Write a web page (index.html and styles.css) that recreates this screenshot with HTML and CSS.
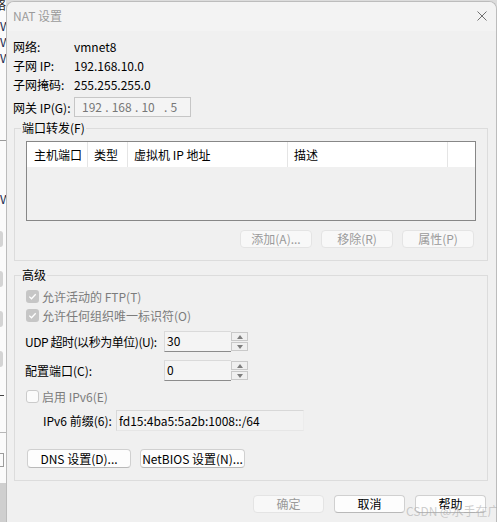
FILE: index.html
```html
<!DOCTYPE html>
<html lang="zh-CN">
<head>
<meta charset="utf-8">
<title>NAT 设置</title>
<link rel="stylesheet" href="styles.css">
</head>
<body>
<div class="screen">
  <div class="behind">
    <span class="bk-char">络</span>
    <span class="bk-w first">W</span>
    <span class="bk-w">W</span>
    <span class="bk-w">W</span>
    <span class="bk-rule"></span>
    <span class="bk-w low">W</span>
    <span class="bk-pill"></span>
    <span class="bk-pill"></span>
    <span class="bk-pill"></span>
    <span class="bk-pill"></span>
    <span class="bk-tick"></span>
    <span class="bk-rule thin"></span>
    <span class="bk-boxmark"></span>
    <span class="bk-foot"></span>
  </div>

  <div class="dialog">
    <div class="titlebar">
      <span class="title">NAT 设置</span>
      <svg class="close" width="10" height="10" viewBox="0 0 10 10" aria-hidden="true">
        <path d="M0.5 0.5L9.5 9.5M9.5 0.5L0.5 9.5" stroke="#707070" stroke-width="1" fill="none"/>
      </svg>
    </div>

    <div class="content">
      <div class="info">
        <div class="info-row"><span class="info-label">网络:</span><span>vmnet8</span></div>
        <div class="info-row"><span class="info-label">子网 IP:</span><span>192.168.10.0</span></div>
        <div class="info-row"><span class="info-label">子网掩码:</span><span>255.255.255.0</span></div>
        <div class="info-row gateway">
          <span class="info-label">网关 IP(G):</span>
          <div class="ipbox">
            <span class="oct">192</span><span class="dot">.</span>
            <span class="oct">168</span><span class="dot">.</span>
            <span class="oct">10</span><span class="dot">.</span>
            <span class="oct">5</span>
          </div>
        </div>
      </div>

      <div class="group forward">
        <div class="legend">端口转发(F)</div>
        <div class="listview">
          <div class="lv-head">
            <div class="lv-col w1">主机端口</div>
            <div class="lv-col w2">类型</div>
            <div class="lv-col w3">虚拟机 IP 地址</div>
            <div class="lv-col w4">描述</div>
            <div class="lv-col w5"></div>
          </div>
        </div>
        <div class="btn-row">
          <button class="btn disabled">添加(A)...</button>
          <button class="btn disabled">移除(R)</button>
          <button class="btn disabled">属性(P)</button>
        </div>
      </div>

      <div class="group advanced">
        <div class="legend">高级</div>

        <div class="check r-ftp">
          <span class="box checked"><svg width="9" height="9" viewBox="0 0 9 9" aria-hidden="true"><path d="M1.3 4.6L3.5 6.8L7.7 2.2" stroke="#ffffff" stroke-width="1.3" fill="none"/></svg></span>
          <span>允许活动的 FTP(T)</span>
        </div>
        <div class="check">
          <span class="box checked"><svg width="9" height="9" viewBox="0 0 9 9" aria-hidden="true"><path d="M1.3 4.6L3.5 6.8L7.7 2.2" stroke="#ffffff" stroke-width="1.3" fill="none"/></svg></span>
          <span>允许任何组织唯一标识符(O)</span>
        </div>

        <div class="field-row r-udp">
          <span class="field-label tight">UDP 超时(以秒为单位)(U):</span>
          <div class="spin">
            <div class="spin-field">30</div>
            <div class="spin-btns">
              <div class="spin-up"><span class="tri-up"></span></div>
              <div class="spin-down"><span class="tri-down"></span></div>
            </div>
          </div>
        </div>

        <div class="field-row r-port">
          <span class="field-label">配置端口(C):</span>
          <div class="spin">
            <div class="spin-field">0</div>
            <div class="spin-btns">
              <div class="spin-up"><span class="tri-up"></span></div>
              <div class="spin-down"><span class="tri-down"></span></div>
            </div>
          </div>
        </div>

        <div class="check r-ipv6">
          <span class="box unchecked"></span>
          <span>启用 IPv6(E)</span>
        </div>

        <div class="field-row r-prefix">
          <span class="prefix-label">IPv6 前缀(6):</span>
          <div class="prefix">fd15:4ba5:5a2b:1008::/64</div>
        </div>

        <div class="r-dns">
          <button class="btn dns">DNS 设置(D)...</button>
          <button class="btn netbios">NetBIOS 设置(N)...</button>
        </div>
      </div>

      <div class="footer">
        <button class="btn disabled">确定</button>
        <button class="btn">取消</button>
        <button class="btn">帮助</button>
      </div>
    </div>
  </div>

  <div class="watermark">CSDN @水手在广东</div>
</div>
</body>
</html>
```

FILE: styles.css
```css
* { box-sizing: border-box; }

html, body { margin: 0; padding: 0; }

body {
  width: 497px;
  height: 522px;
  overflow: hidden;
  background: #dcdcdc;
  font-family: "Noto Sans CJK SC", "Noto Sans", sans-serif;
  font-size: 12px;
  color: #000;
}

.screen {
  position: relative;
  display: flex;
  width: 497px;
  height: 522px;
}

/* window behind the dialog */
.behind {
  flex: none;
  width: 6px;
  overflow: hidden;
  background: #fbfbfb;
  display: flex;
  flex-direction: column;
  font-size: 12px;
  line-height: 14px;
  color: #1d1d1d;
}
.bk-char { margin-left: -6px; margin-top: -2px; }
.bk-w { margin-top: 2px; color: #1f2f55; font-family: "Liberation Sans", sans-serif; }
.bk-w.first { margin-top: 8px; }
.bk-rule { display: block; height: 1px; background: #9a9a9a; margin-top: 74px; }
.bk-rule.thin { background: #b8b8b8; margin-top: 36px; }
.bk-w.low { margin-top: 52px; }
.bk-pill { display: block; width: 3px; height: 16px; border-radius: 0 3px 3px 0; background: #d4d4d4; margin-top: 24px; }
.bk-tick { display: block; width: 4px; height: 1px; background: #444; margin-top: 28px; }
.bk-boxmark { display: block; width: 4px; height: 14px; border: 1px solid #9c9c9c; border-left: 0; margin-top: 20px; }
.bk-foot { display: block; flex: 1; background: #cfcfcf; margin-top: 16px; }

/* dialog */
.dialog {
  flex: 1;
  min-width: 0;
  margin-top: 1px;
  display: flex;
  flex-direction: column;
  background: #f0f0f0;
  border: 1px solid #bcbcbc;
  border-bottom: 0;
  border-radius: 8px 8px 0 0;
  overflow: hidden;
}

.titlebar {
  flex: none;
  height: 29px;
  display: flex;
  align-items: center;
  justify-content: space-between;
  padding: 0 9px 2px 6px;
  background: #f3f3f3;
}
.title { color: #9b9b9b; line-height: 16px; }
.close { display: block; }

.content {
  flex: 1;
  display: flex;
  flex-direction: column;
  padding: 6px 8px 0 6px;
}

.info-row {
  display: flex;
  align-items: center;
  height: 19px;
  line-height: 19px;
}
.info-label { flex: none; width: 61px; }
.info-row.gateway { height: 20px; margin-top: 3px; }

.ipbox {
  display: flex;
  align-items: center;
  width: 117px;
  height: 20px;
  padding-left: 7px;
  border: 1px solid #c6c6c6;
  background: #f4f4f4;
  color: #777;
  line-height: 18px;
}
.oct { width: 20px; }
.dot { width: 10px; text-align: center; }

/* group boxes */
.group {
  display: flex;
  flex-direction: column;
  align-items: flex-start;
  margin-left: 1px;
  border: 1px solid #dcdcdc;
  padding: 0 10px 12px 11px;
}
.forward { margin-top: 11px; }
.advanced { margin-top: 14px; }

.legend {
  height: 16px;
  line-height: 16px;
  margin: -9px 0 0 -5px;
  padding: 0 1px;
  background: #f0f0f0;
  white-space: nowrap;
}

.listview {
  width: 450px;
  height: 80px;
  margin-top: 5px;
  border: 1px solid #878787;
  background: #f0f0f0;
}
.lv-head {
  display: flex;
  height: 25px;
  background: #fff;
}
.lv-col {
  flex: none;
  height: 25px;
  line-height: 25px;
  padding-left: 6px;
  border-right: 1px solid #e5e5e5;
  white-space: nowrap;
}
.w1 { width: 61px; padding-left: 7px; }
.w2 { width: 40px; }
.w3 { width: 160px; }
.w4 { width: 160px; }
.w5 { flex: 1; border-right: 0; }

.btn-row {
  align-self: stretch;
  display: flex;
  justify-content: flex-end;
  gap: 9px;
  margin-top: 9px;
  padding-right: 3px;
}
.btn-row .btn { width: 72px; }

.btn {
  height: 18px;
  padding: 0;
  font: inherit;
  font-size: 12px;
  line-height: 16px;
  color: #000;
  background: #fdfdfd;
  border: 1px solid #d0d0d0;
  border-bottom-color: #b9b9b9;
  border-radius: 4px;
  white-space: nowrap;
}
.btn.disabled {
  color: #9a9a9a;
  background: #f8f8f8;
  border-color: #e4e4e4;
}

/* checkboxes */
.check {
  display: flex;
  align-items: center;
  gap: 3px;
  height: 19px;
  color: #7c7c7c;
}
.r-ftp { margin-top: 4px; }
.r-ipv6 { margin-top: 6px; }

.box {
  flex: none;
  width: 13px;
  height: 13px;
  border-radius: 3px;
}
.box.checked {
  display: flex;
  align-items: center;
  justify-content: center;
  background: #c6c6c6;
}
.box.checked svg { display: block; }
.box.unchecked {
  background: #fbfbfb;
  border: 1px solid #cbcbcb;
}

/* fields */
.field-row {
  display: flex;
  align-items: center;
  height: 21px;
}
.r-udp { margin-top: 6px; }
.r-port { margin-top: 8px; }
.r-prefix { margin-top: 4px; padding-left: 17px; }

.field-label {
  flex: none;
  width: 139px;
  margin-left: -1px;
  padding-right: 1px;
  white-space: nowrap;
}
.field-label.tight { letter-spacing: -0.45px; }

.spin {
  display: flex;
  width: 84px;
  height: 21px;
}
.spin-field {
  flex: 1;
  padding-left: 2px;
  line-height: 17px;
  background: #f4f4f4;
  border: 1px solid #dadada;
  border-right: 0;
  border-bottom: 1px solid #8c8c8c;
}
.spin-btns {
  flex: none;
  width: 17px;
  display: flex;
  flex-direction: column;
  gap: 1px;
  padding: 1px 0;
}
.spin-up, .spin-down {
  flex: 1;
  display: flex;
  align-items: center;
  justify-content: center;
  border: 1px solid #c9c9c9;
  background: #f0f0f0;
}
.tri-up, .tri-down {
  width: 0;
  height: 0;
  border-left: 3px solid transparent;
  border-right: 3px solid transparent;
}
.tri-up { border-bottom: 4px solid #7e7e7e; }
.tri-down { border-top: 4px solid #7e7e7e; }

.prefix-label { flex: none; width: 73px; white-space: nowrap; }
.prefix {
  width: 188px;
  height: 21px;
  padding-left: 2px;
  line-height: 19px;
  background: #f2f2f2;
  border: 1px solid #d8d8d8;
  border-right-color: #ececec;
  border-bottom-color: #e6e6e6;
}

.r-dns {
  display: flex;
  gap: 9px;
  margin-top: 18px;
  margin-left: 1px;
}
.r-dns .btn { height: 19px; }
.btn.dns { width: 104px; }
.btn.netbios { width: 105px; }

.footer {
  display: flex;
  justify-content: flex-end;
  gap: 10px;
  margin-top: 14px;
  padding-right: 2px;
}
.footer .btn { width: 71px; }

.watermark {
  position: absolute;
  left: 406px;
  top: 503px;
  font-size: 12px;
  line-height: 16px;
  color: rgba(165, 165, 165, 0.55);
  white-space: nowrap;
  pointer-events: none;
}
```
